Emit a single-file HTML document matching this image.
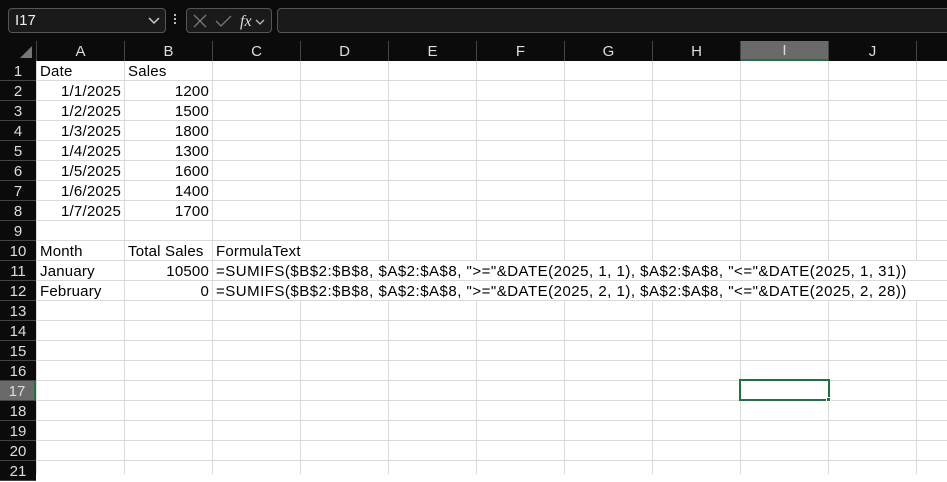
<!DOCTYPE html>
<html><head><style>
*{margin:0;padding:0;box-sizing:border-box}
body{width:947px;height:474px;overflow:hidden;background:#fff;font-family:"Liberation Sans",sans-serif;position:relative}
.tb{position:absolute;left:0;top:0;width:947px;height:41px;background:#0b0b0b}
.box{position:absolute;border:1px solid #555;border-radius:4px;background:#1a1a1a}
.ch{position:absolute;top:41px;height:20px;background:#0b0b0b;color:#ddd;font-size:15px;text-align:center;line-height:21px;border-right:1px solid #444}
.rh{position:absolute;left:0;width:36px;height:20px;background:#0b0b0b;color:#ddd;font-size:15px;text-align:center;line-height:21px;border-bottom:1px solid #444}
.vl{position:absolute;top:61px;width:1px;height:413px;background:#dadada}
.hl{position:absolute;left:36px;width:911px;height:1px;background:#dadada}
.c{position:absolute;height:20px;line-height:22px;font-size:15px;letter-spacing:0.2px;color:#000;white-space:nowrap}
.f{letter-spacing:0.5px}
.r{text-align:right;width:84px}
</style></head><body>
<div class="tb"></div>
<div class="box" style="left:8px;top:8px;width:158px;height:25px"></div>
<div style="position:absolute;left:15px;top:12px;color:#eee;font-size:15px">I17</div>
<svg style="position:absolute;left:148px;top:17px" width="12" height="8"><path d="M1 1 L6 6 L11 1" stroke="#ccc" fill="none" stroke-width="1.5"/></svg>
<div style="position:absolute;left:174px;top:14px;width:2px;height:2px;background:#bbb;box-shadow:0 4px 0 #bbb,0 8px 0 #bbb"></div>
<div class="box" style="left:186px;top:8px;width:86px;height:25px"></div>
<svg style="position:absolute;left:192px;top:14px" width="80" height="16"><path d="M2 1 L14 13 M14 1 L2 13" stroke="#777" stroke-width="1.3"/><path d="M24 7 L29 12 L39 2" stroke="#777" fill="none" stroke-width="1.3"/><text x="48" y="12" fill="#ddd" font-family="Liberation Serif" font-style="italic" font-size="16">fx</text><path d="M64 6 L68 10 L72 6" stroke="#bbb" fill="none" stroke-width="1.3"/></svg>
<div class="box" style="left:277px;top:8px;width:680px;height:25px"></div>

<div class="ch" style="left:0;width:37px"><svg width="36" height="20"><path d="M20 17 L32 17 L32 5 Z" fill="#777"/></svg></div>
<div class="ch" style="left:37px;width:88px">A</div>
<div class="ch" style="left:125px;width:88px">B</div>
<div class="ch" style="left:213px;width:88px">C</div>
<div class="ch" style="left:301px;width:88px">D</div>
<div class="ch" style="left:389px;width:88px">E</div>
<div class="ch" style="left:477px;width:88px">F</div>
<div class="ch" style="left:565px;width:88px">G</div>
<div class="ch" style="left:653px;width:88px">H</div>
<div class="ch" style="left:741px;width:88px;background:#6a6a6a;border-bottom:2px solid #1e7145;line-height:19px">I</div>
<div class="ch" style="left:829px;width:88px">J</div>
<div class="ch" style="left:917px;width:30px;border:none"></div>

<div class="rh" style="top:61px">1</div><div class="rh" style="top:81px">2</div><div class="rh" style="top:101px">3</div><div class="rh" style="top:121px">4</div><div class="rh" style="top:141px">5</div><div class="rh" style="top:161px">6</div><div class="rh" style="top:181px">7</div><div class="rh" style="top:201px">8</div><div class="rh" style="top:221px">9</div><div class="rh" style="top:241px">10</div><div class="rh" style="top:261px">11</div><div class="rh" style="top:281px">12</div><div class="rh" style="top:301px">13</div><div class="rh" style="top:321px">14</div><div class="rh" style="top:341px">15</div><div class="rh" style="top:361px">16</div><div class="rh" style="top:381px;background:#6a6a6a;border-right:2px solid #1e7145">17</div><div class="rh" style="top:401px">18</div><div class="rh" style="top:421px">19</div><div class="rh" style="top:441px">20</div><div class="rh" style="top:461px">21</div>

<div class="vl" style="left:36px"></div><div class="vl" style="left:124px"></div><div class="vl" style="left:212px"></div><div class="vl" style="left:300px"></div><div class="vl" style="left:388px"></div><div class="vl" style="left:476px"></div><div class="vl" style="left:564px"></div><div class="vl" style="left:652px"></div><div class="vl" style="left:740px"></div><div class="vl" style="left:828px"></div><div class="vl" style="left:916px"></div>
<div style="position:absolute;left:213px;top:261px;width:734px;height:39px;background:#fff"></div>
<div style="position:absolute;left:300px;top:241px;width:1px;height:20px;background:#fff"></div>

<div class="hl" style="top:80px"></div><div class="hl" style="top:100px"></div><div class="hl" style="top:120px"></div><div class="hl" style="top:140px"></div><div class="hl" style="top:160px"></div><div class="hl" style="top:180px"></div><div class="hl" style="top:200px"></div><div class="hl" style="top:220px"></div><div class="hl" style="top:240px"></div><div class="hl" style="top:260px"></div><div class="hl" style="top:280px"></div><div class="hl" style="top:300px"></div><div class="hl" style="top:320px"></div><div class="hl" style="top:340px"></div><div class="hl" style="top:360px"></div><div class="hl" style="top:380px"></div><div class="hl" style="top:400px"></div><div class="hl" style="top:420px"></div><div class="hl" style="top:440px"></div><div class="hl" style="top:460px"></div>

<div class="c" style="left:40px;top:61px">Date</div><div class="c" style="left:128px;top:61px">Sales</div>
<div class="c r" style="left:37px;top:81px">1/1/2025</div><div class="c r" style="left:125px;top:81px">1200</div>
<div class="c r" style="left:37px;top:101px">1/2/2025</div><div class="c r" style="left:125px;top:101px">1500</div>
<div class="c r" style="left:37px;top:121px">1/3/2025</div><div class="c r" style="left:125px;top:121px">1800</div>
<div class="c r" style="left:37px;top:141px">1/4/2025</div><div class="c r" style="left:125px;top:141px">1300</div>
<div class="c r" style="left:37px;top:161px">1/5/2025</div><div class="c r" style="left:125px;top:161px">1600</div>
<div class="c r" style="left:37px;top:181px">1/6/2025</div><div class="c r" style="left:125px;top:181px">1400</div>
<div class="c r" style="left:37px;top:201px">1/7/2025</div><div class="c r" style="left:125px;top:201px">1700</div>
<div class="c" style="left:40px;top:241px">Month</div><div class="c" style="left:128px;top:241px">Total Sales</div><div class="c" style="left:216px;top:241px">FormulaText</div>
<div class="c" style="left:40px;top:261px">January</div><div class="c r" style="left:125px;top:261px">10500</div>
<div class="c f" style="left:216px;top:261px">=SUMIFS($B$2:$B$8, $A$2:$A$8, "&gt;="&amp;DATE(2025, 1, 1), $A$2:$A$8, "&lt;="&amp;DATE(2025, 1, 31))</div>
<div class="c" style="left:40px;top:281px">February</div><div class="c r" style="left:125px;top:281px">0</div>
<div class="c f" style="left:216px;top:281px">=SUMIFS($B$2:$B$8, $A$2:$A$8, "&gt;="&amp;DATE(2025, 2, 1), $A$2:$A$8, "&lt;="&amp;DATE(2025, 2, 28))</div>

<div style="position:absolute;left:739px;top:379px;width:91px;height:22px;border:2px solid #1e7145"></div>
<div style="position:absolute;left:826px;top:397px;width:5px;height:5px;background:#1e7145;border:1px solid #fff"></div>
</body></html>
